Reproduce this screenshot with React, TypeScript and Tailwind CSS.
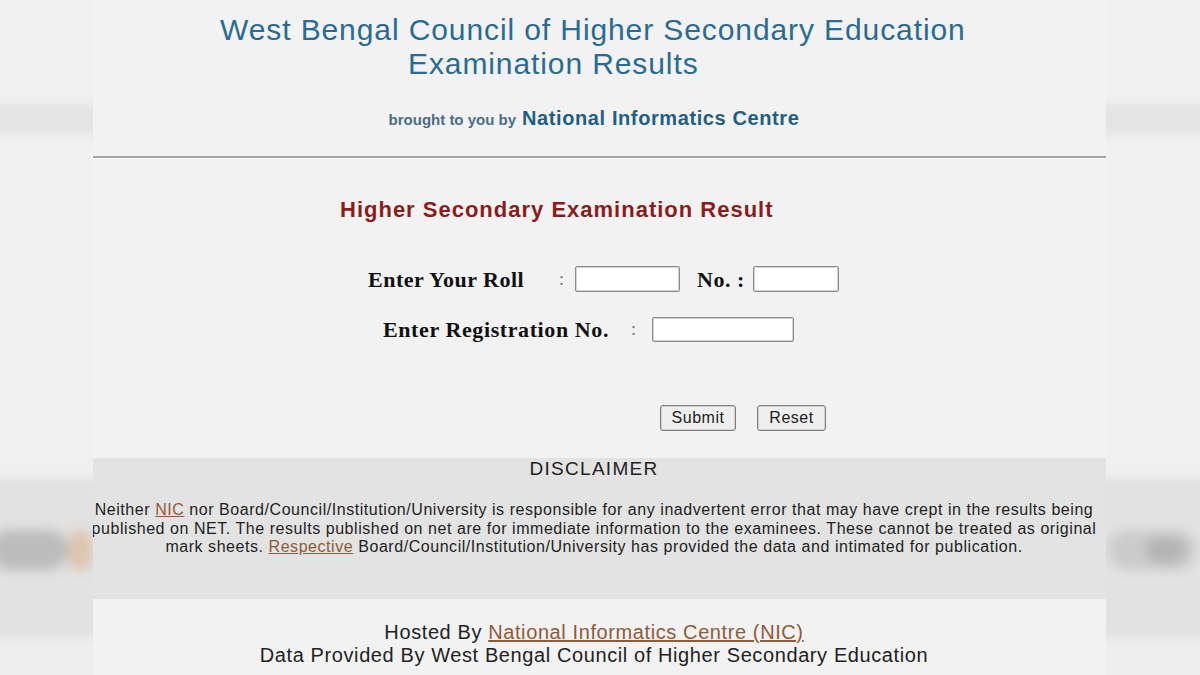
import React from "react";

function Side({ right }: { right?: boolean }) {
  return (
    <div className={right ? "flex-1 overflow-hidden" : "w-[93px] shrink-0 overflow-hidden"}>
      <div className="-mx-[10px] -mt-[10px] flex flex-col blur-[5px]">
        <div className="h-[114px] bg-[#f0f0f0]" />
        <div className="h-[30px] bg-[#e4e4e4]" />
        <div className="h-[344px] bg-[#f0f0f0]" />
        <div className="h-[160px] bg-[#e2e2e2] pt-[52px]">
          {right ? (
            <div className="ml-[12px] flex h-[40px] w-[88px] items-center justify-end rounded-full bg-[#cbcbcb] pr-[10px] blur-[3px]">
              <div className="h-[26px] w-[40px] rounded-full bg-[#b4b4b4]" />
            </div>
          ) : (
            <div className="flex h-[40px] blur-[3px]">
              <div className="w-[78px] rounded-full bg-[#bcbcbc]" />
              <div className="w-[24px] rounded-full bg-[#dcc4b0]" />
            </div>
          )}
        </div>
        <div className="h-[60px] bg-[#eeeeee]" />
      </div>
    </div>
  );
}

function TextInput({ w, h }: { w: string; h: string }) {
  return (
    <input
      type="text"
      className={`${w} ${h} rounded-[2px] border border-[#8a8a8a] bg-white shadow-[inset_0_0_0_1px_#d4d4d4] outline-none`}
    />
  );
}

export default function App() {
  return (
    <div className="flex h-[675px] w-[1200px] overflow-hidden bg-[#f0f0f0] font-['Liberation_Sans',Arial,sans-serif]">
      <Side />
      <main className="flex w-[1013px] shrink-0 flex-col bg-[#f2f2f2]">
        <header className="pt-[13px]">
          <div className="whitespace-nowrap pl-[127px] text-[30px] leading-[34px] tracking-[0.9px] text-[#2a6b93]">
            <div>West Bengal Council of Higher Secondary Education</div>
            <div className="pl-[188px]">Examination Results</div>
          </div>
          <div className="mt-[26px] flex items-baseline justify-center whitespace-nowrap pr-[11px] leading-[23px]">
            <span className="text-[15px] font-bold text-[#4a6e86]">brought to you by</span>
            <span className="ml-[6px] text-[20px] font-bold tracking-[0.6px] text-[#1f5f86]">
              National Informatics Centre
            </span>
          </div>
        </header>

        <div className="mt-[25px] h-[3px] border-t-2 border-b border-t-[#a5a5a5] border-b-[#fbfbfb]" />

        <h2 className="ml-[247px] mt-[38px] whitespace-nowrap text-[22px] font-bold leading-[25px] tracking-[1px] text-[#8b1c1c]">
          Higher Secondary Examination Result
        </h2>

        <div className="font-['Liberation_Serif','Times_New_Roman',serif]">
          <div className="mt-[44px] flex h-[26px] items-center whitespace-nowrap pl-[275px]">
            <span className="w-[191px] text-[22px] font-bold tracking-[0.5px] text-[#111]">Enter Your Roll</span>
            <span className="w-[16px] text-[18px] text-[#777]">:</span>
            <TextInput w="w-[105px]" h="h-[26px]" />
            <span className="ml-[17px] w-[56px] text-[22px] font-bold tracking-[0.5px] text-[#111]">No. :</span>
            <TextInput w="w-[86px]" h="h-[26px]" />
          </div>
          <div className="mt-[25px] flex h-[25px] items-center whitespace-nowrap pl-[290px]">
            <span className="w-[248px] text-[22px] font-bold tracking-[0.6px] text-[#111]">Enter Registration No.</span>
            <span className="w-[21px] text-[18px] text-[#777]">:</span>
            <TextInput w="w-[142px]" h="h-[25px]" />
          </div>
        </div>

        <div className="mt-[63px] flex pl-[567px]">
          <button className="h-[26px] w-[76px] rounded-[3px] border border-[#7d7d7d] bg-[#efefef] text-[16px] tracking-[0.5px] text-[#222] shadow-[inset_0_0_0_1px_#d2d2d2]">
            Submit
          </button>
          <button className="ml-[21px] h-[26px] w-[69px] rounded-[3px] border border-[#7d7d7d] bg-[#efefef] text-[16px] tracking-[0.5px] text-[#222] shadow-[inset_0_0_0_1px_#d2d2d2]">
            Reset
          </button>
        </div>

        <section className="mt-[27px] flex h-[141px] flex-col items-center overflow-hidden bg-[#e3e3e3] pr-[11px] text-[#1e1e1e]">
          <div className="text-[19px] leading-[22px] tracking-[1.3px] text-[#222]">DISCLAIMER</div>
          <div className="mt-[21px] flex flex-col items-center whitespace-nowrap text-[16px] leading-[18.5px] tracking-[0.55px]">
            <div>
              Neither <a className="text-[#8e5b3a] underline">NIC</a> nor Board/Council/Institution/University is
              responsible for any inadvertent error that may have crept in the results being
            </div>
            <div>
              published on NET. The results published on net are for immediate information to the examinees. These
              cannot be treated as original
            </div>
            <div>
              mark sheets. <a className="text-[#8e5b3a] underline">Respective</a> Board/Council/Institution/University
              has provided the data and intimated for publication.
            </div>
          </div>
        </section>

        <footer className="mt-[22px] flex flex-col items-center whitespace-nowrap pr-[11px] text-[20px] leading-[23px] tracking-[0.6px] text-[#222]">
          <div>
            Hosted By <a className="text-[#8e5b3a] underline">National Informatics Centre (NIC)</a>
          </div>
          <div>Data Provided By West Bengal Council of Higher Secondary Education</div>
        </footer>
      </main>
      <Side right />
    </div>
  );
}
